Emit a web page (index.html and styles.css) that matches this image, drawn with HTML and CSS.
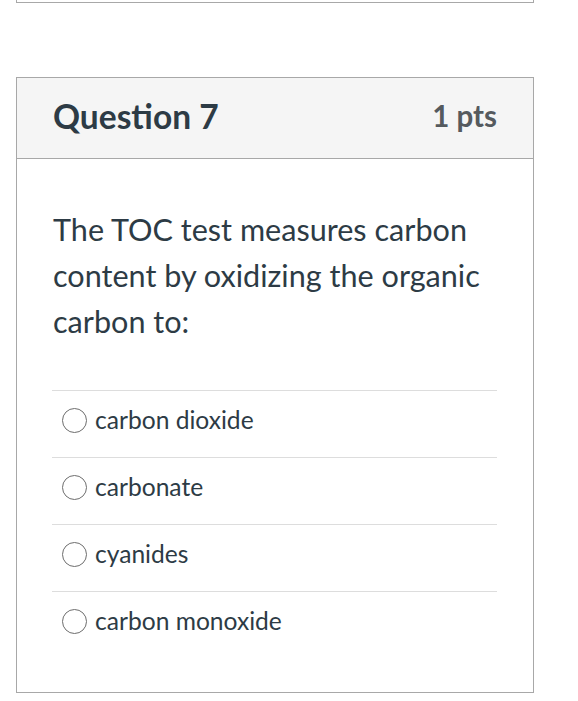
FILE: index.html
```html
<!DOCTYPE html>
<html lang="en">
<head>
<meta charset="utf-8">
<link rel="stylesheet" href="styles.css">
</head>
<body>
<div class="prev-card"></div>
<div class="question-card">
  <div class="q-header">
    <h2 class="q-title">Question 7</h2>
    <span class="q-points">1 pts</span>
  </div>
  <div class="q-body">
    <p class="q-text">The TOC test measures carbon content by oxidizing the organic carbon to:</p>
    <div class="answers">
      <label class="answer"><span class="radio"></span><span class="answer-text">carbon dioxide</span></label>
      <label class="answer"><span class="radio"></span><span class="answer-text">carbonate</span></label>
      <label class="answer"><span class="radio"></span><span class="answer-text">cyanides</span></label>
      <label class="answer"><span class="radio"></span><span class="answer-text">carbon monoxide</span></label>
    </div>
  </div>
</div>
</body>
</html>
```

FILE: styles.css
```css
html, body {
  margin: 0;
  padding: 0;
  background: #ffffff;
}
body {
  font-family: Lato, "Noto Sans", sans-serif;
  color: #2d3b45;
}
.prev-card {
  margin-left: 16px;
  width: 516px;
  height: 2px;
  border: 1px solid #a8a8a8;
  border-top: none;
}
.question-card {
  margin-top: 74px;
  margin-left: 16px;
  width: 516px;
  border: 1px solid #a8a8a8;
}
.q-header {
  height: 80px;
  background: #f5f5f5;
  border-bottom: 1px solid #a8a8a8;
  display: flex;
  align-items: center;
  justify-content: space-between;
  padding: 0 36px 0 35px;
}
.q-title {
  margin: 0;
  font-size: 33.5px;
  line-height: 40px;
  font-weight: 700;
  color: #2d3b45;
  padding-left: 1px;
  position: relative;
  top: -2px;
}
.q-points {
  font-size: 29.5px;
  line-height: 40px;
  font-weight: 700;
  color: #555a5e;
  position: relative;
  top: -2px;
}
.q-body {
  padding: 48px 36px 34px 35px;
}
.q-text {
  margin: 0 0 45px 1px;
  font-size: 30.6px;
  line-height: 46px;
}
.answer {
  display: flex;
  align-items: flex-start;
  height: 52px;
  padding-top: 14px;
  border-top: 1px solid #dddddd;
}
.radio {
  width: 23px;
  height: 23px;
  border: 1.5px solid #6d6d6d;
  border-radius: 50%;
  margin-top: 3px;
  margin-left: 10px;
  margin-right: 8px;
  flex: none;
}
.answer-text {
  font-size: 24.6px;
  line-height: 30px;
}
```
